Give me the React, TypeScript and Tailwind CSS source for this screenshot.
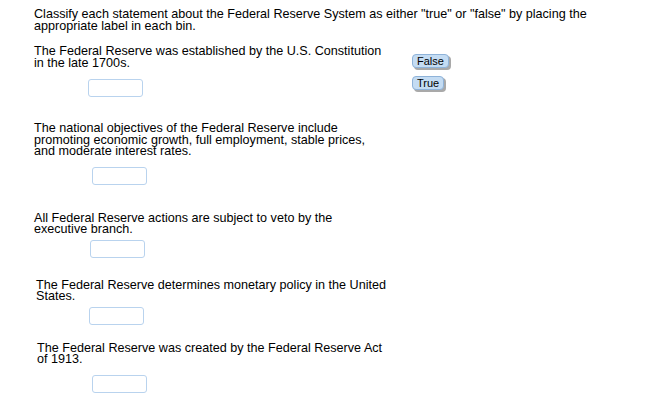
import React from 'react';

const statements = [
  { text: 'The Federal Reserve was established by the U.S. Constitution in the late 1700s.', mt: 'mt-[14px]', pl: 'pl-0', w: 'w-[350px]', boxMt: 'mt-[10px]', boxMl: 'ml-[54px]' },
  { text: 'The national objectives of the Federal Reserve include promoting economic growth, full employment, stable prices, and moderate interest rates.', mt: 'mt-[26px]', pl: 'pl-0', w: 'w-[340px]', boxMt: 'mt-[9px]', boxMl: 'ml-[58px]' },
  { text: 'All Federal Reserve actions are subject to veto by the executive branch.', mt: 'mt-[28px]', pl: 'pl-0', w: 'w-[305px]', boxMt: 'mt-[4px]', boxMl: 'ml-[56px]' },
  { text: 'The Federal Reserve determines monetary policy in the United States.', mt: 'mt-[22px]', pl: 'pl-[2px]', w: 'w-[354px]', boxMt: 'mt-[4px]', boxMl: 'ml-[55px]' },
  { text: 'The Federal Reserve was created by the Federal Reserve Act of 1913.', mt: 'mt-[18px]', pl: 'pl-[3px]', w: 'w-[352px]', boxMt: 'mt-[9px]', boxMl: 'ml-[58px]' },
];

const Chip: React.FC<{ label: string }> = ({ label }) => (
  <div className="w-fit rounded-[4px] border border-[#8fb3d9] bg-[#c4dcf3] px-[4px] text-[11px] leading-[12px] text-black shadow-[2px_2px_0_#a9a9a9]">
    {label}
  </div>
);

export default function App() {
  return (
    <div className="min-h-[408px] w-[660px] bg-white pl-[34px] pt-[9px] text-[12.6px] leading-[11.5px] text-black [font-family:'Liberation_Sans',Arial,sans-serif]">
      <p className="w-[560px]">
        Classify each statement about the Federal Reserve System as either "true" or "false" by placing the appropriate label in each bin.
      </p>
      <div className="flex">
        <div className="w-[378px]">
          {statements.map((s, i) => (
            <div key={i} className={s.mt}>
              <p className={`${s.pl} ${s.w}`}>{s.text}</p>
              <div className={`${s.boxMt} ${s.boxMl} h-[18px] w-[55px] rounded-[3px] border border-[#b9d3ee] bg-white`} />
            </div>
          ))}
        </div>
        <div className="mt-[22px] flex flex-col gap-[8px]">
          <Chip label="False" />
          <Chip label="True" />
        </div>
      </div>
    </div>
  );
}
